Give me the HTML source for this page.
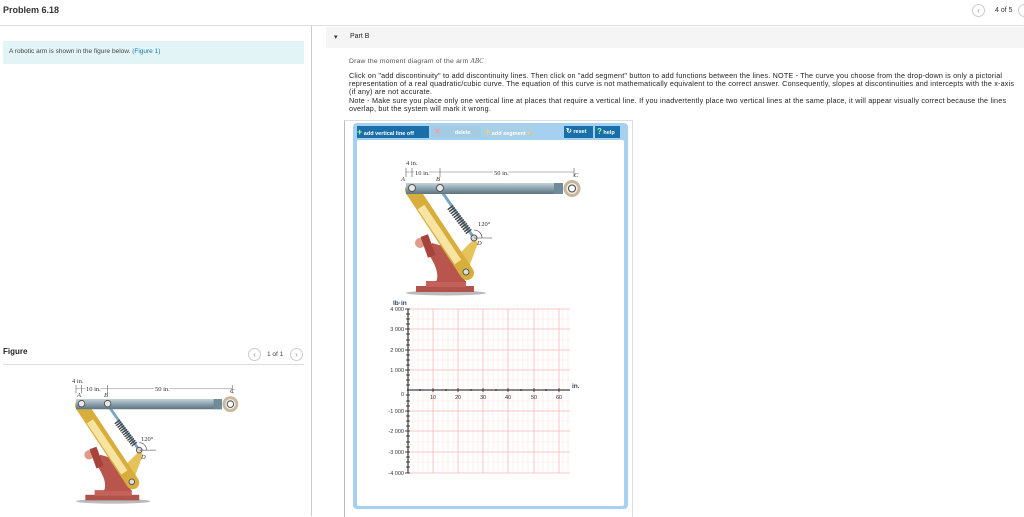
<!DOCTYPE html>
<html><head><meta charset="utf-8"><style>
body{margin:0;width:1024px;height:516px;overflow:hidden;background:#fff;font-family:"Liberation Sans",sans-serif;color:#333;position:relative}
.a{position:absolute;white-space:nowrap}
.circ{position:absolute;width:11px;height:11px;border:1px solid #ccc;border-radius:50%;font-size:8px;color:#999;text-align:center;line-height:11px}
.ins{font-size:7.2px;color:#222;letter-spacing:0.2px}
.btn{position:absolute;top:126px;height:12px;font-size:5.5px;font-weight:bold;color:#fff;line-height:12px}
</style></head><body>
<div class="a" style="left:3px;top:5px;font-size:9px;font-weight:bold;color:#333">Problem 6.18</div>
<div class="a" style="left:0;top:25px;width:1024px;height:1px;background:#ddd"></div>
<div class="a" style="left:311px;top:26px;width:1px;height:490px;background:#ccc"></div>
<div class="circ" style="left:972px;top:4px">‹</div>
<div class="a" style="left:995px;top:7px;font-size:7px">4 of 5</div>
<div class="circ" style="left:1018px;top:4px"></div>

<div class="a" style="left:3px;top:41px;width:301px;height:23px;background:#e3f4f6"></div>
<div class="a" style="left:9px;top:48px;font-size:6.5px;color:#444">A robotic arm is shown in the figure below. <span style="color:#1a7ab0">(Figure 1)</span></div>

<div class="a" style="left:3px;top:347px;font-size:8px;font-weight:bold;color:#222">Figure</div>
<div class="a" style="left:3px;top:364px;width:301px;height:1px;background:#ddd"></div>
<div class="circ" style="left:248px;top:348px">‹</div>
<div class="a" style="left:267px;top:351px;font-size:6.5px;color:#444">1 of 1</div>
<div class="circ" style="left:290px;top:348px">›</div>

<div class="a" style="left:326px;top:27px;width:698px;height:21px;background:#f5f5f5"></div>
<div class="a" style="left:334px;top:33px;font-size:7px">▾</div>
<div class="a" style="left:350px;top:33px;font-size:7px;color:#222">Part B</div>
<div class="a" style="left:349px;top:58px;font-size:6.8px;color:#555;letter-spacing:0.2px">Draw the moment diagram of the arm <i style="font-family:'Liberation Serif'">ABC</i></div>
<div class="a ins" style="left:349px;top:71px">Click on "add discontinuity" to add discontinuity lines. Then click on "add segment" button to add functions between the lines. NOTE - The curve you choose from the drop-down is only a pictorial</div>
<div class="a ins" style="left:349px;top:79px">representation of a real quadratic/cubic curve. The equation of this curve is not mathematically equivalent to the correct answer. Consequently, slopes at discontinuities and intercepts with the x-axis</div>
<div class="a ins" style="left:349px;top:87px">(if any) are not accurate.</div>
<div class="a ins" style="left:349px;top:96px">Note - Make sure you place only one vertical line at places that require a vertical line. If you inadvertently place two vertical lines at the same place, it will appear visually correct because the lines</div>
<div class="a ins" style="left:349px;top:104px">overlap, but the system will mark it wrong.</div>

<div class="a" style="left:344px;top:120px;width:287px;height:396px;border-left:1px solid #bbb;border-top:1px solid #ddd;border-right:1px solid #ddd"></div>
<div class="a" style="left:353px;top:123px;width:275px;height:386px;background:#a6d0f0;border-radius:4px"></div>
<div class="a" style="left:357px;top:140px;width:267px;height:366px;background:#fff;border-radius:2px"></div>
<div class="btn" style="left:357px;width:72px;background:#1b6fa8"><span style="color:#9f9;font-size:9px">+</span> add vertical line off</div>
<div class="btn" style="left:431px;width:50px;background:#a3cbe3"><span style="color:#f9a;font-size:8px;margin-left:3px">✕</span><span style="margin-left:14px">delete</span></div>
<div class="btn" style="left:483px;width:53px;background:#a8cfe6"><span style="color:#fc6;font-size:9px;margin-left:2px">+</span> add segment <span style="color:#fc6">▾</span></div>
<div class="btn" style="left:564px;width:29px;background:#1b6fa8"><span style="font-size:7px;margin-left:2px">↻</span> reset</div>
<div class="btn" style="left:595px;width:25px;background:#1b6fa8"><span style="color:#9f9;font-size:8px;margin-left:2px">?</span> help</div>

<svg class="a" style="left:0;top:0" width="1024" height="516">
<defs>
<linearGradient id="bar" x1="0" y1="0" x2="0" y2="1"><stop offset="0" stop-color="#c4d3da"/><stop offset=".5" stop-color="#8aa2ad"/><stop offset="1" stop-color="#5d7480"/></linearGradient>
<g id="fig">
<ellipse cx="40" cy="110" rx="40" ry="2.5" fill="#bbb"/>
<rect x="10" y="103" width="58" height="6" fill="#b0544b"/>
<rect x="20" y="98" width="40" height="6" fill="#c3625a"/>
<path d="M30 99 C34 90 28 80 22 70 L26 60 L40 64 L52 78 C56 88 56 94 60 99 Z" fill="#b8564d"/>
<circle cx="14" cy="60" r="5" fill="#e09a8a"/>
<rect x="18" y="52" width="8" height="22" fill="#a8433c" transform="rotate(-20 22 63)"/>
<path d="M50 74 L68 56 L72 60 L60 92 Z" fill="#e5c35a"/>
<line x1="6" y1="7" x2="61" y2="90" stroke="#d7ae3c" stroke-width="14" stroke-linecap="round"/>
<line x1="15" y1="24" x2="52" y2="79" stroke="#f7e3a2" stroke-width="8"/>
<circle cx="60" cy="89" r="3" fill="#ddd" stroke="#555"/>
<line x1="34" y1="6" x2="68" y2="55" stroke="#7aa6c2" stroke-width="3"/>
<line x1="44" y1="24" x2="63" y2="49" stroke="#444" stroke-width="7" stroke-dasharray="1.5 1"/>
<circle cx="68" cy="55" r="3" fill="#ddd" stroke="#555"/>
<rect x="0" y="0" width="156" height="11" fill="url(#bar)"/>
<rect x="148" y="0" width="9" height="11" fill="#6f8a99"/>
<circle cx="166" cy="5.5" r="7" fill="#eee" stroke="#c8b79a" stroke-width="3"/>
<circle cx="166" cy="5.5" r="3.5" fill="#fff" stroke="#444"/>
<circle cx="6" cy="5" r="3.5" fill="#e8e8e8" stroke="#555"/>
<circle cx="34" cy="5" r="3.5" fill="#e8e8e8" stroke="#555"/>
<path d="M68 47 A8 8 0 0 1 76 55" fill="none" stroke="#333" stroke-width=".6"/>
<line x1="68" y1="55" x2="86" y2="55" stroke="#333" stroke-width=".6"/>
<line x1="0" y1="-11" x2="168" y2="-11" stroke="#777" stroke-width=".5"/>
<line x1="0" y1="-15" x2="0" y2="-6" stroke="#555" stroke-width=".6"/>
<line x1="6" y1="-15" x2="6" y2="-6" stroke="#555" stroke-width=".6"/>
<line x1="34" y1="-15" x2="34" y2="-6" stroke="#555" stroke-width=".6"/>
<line x1="168" y1="-15" x2="168" y2="-6" stroke="#555" stroke-width=".6"/>
</g>
</defs>
<use href="#fig" transform="translate(406,183)"/>
<use href="#fig" transform="translate(76,399) scale(0.93)"/>
<g font-family="Liberation Serif" font-size="6.5" fill="#333">
<text x="406" y="165">4 in.</text><text x="415" y="175" fill="#fff" stroke="#fff" stroke-width="3">10 in.</text><text x="415" y="175">10 in.</text>
<text x="494" y="175" fill="#fff" stroke="#fff" stroke-width="3">50 in.</text><text x="494" y="175">50 in.</text>
<text x="401" y="181" font-style="italic">A</text><text x="436" y="181" font-style="italic">B</text><text x="574" y="177" font-style="italic">C</text>
<text x="478" y="226">120°</text><text x="477" y="245" font-style="italic">D</text>
<text x="72" y="383">4 in.</text><text x="86" y="391" fill="#fff" stroke="#fff" stroke-width="3">10 in.</text><text x="86" y="391">10 in.</text>
<text x="155" y="391" fill="#fff" stroke="#fff" stroke-width="3">50 in.</text><text x="155" y="391">50 in.</text>
<text x="77" y="397" font-style="italic">A</text><text x="104" y="397" font-style="italic">B</text><text x="230" y="393" font-style="italic">C</text>
<text x="141" y="441">120°</text><text x="141" y="459" font-style="italic">D</text>
</g>
</svg>

<svg class="a" style="left:0;top:0" width="1024" height="516">
<g stroke="#fde4e4" stroke-width=".6">
<path d="M413 309V473M418 309V473M423 309V473M428 309V473M438 309V473M443 309V473M448 309V473M453 309V473M463 309V473M468 309V473M473 309V473M478 309V473M488 309V473M493 309V473M498 309V473M503 309V473M513 309V473M518 309V473M523 309V473M528 309V473M538 309V473M543 309V473M548 309V473M553 309V473M563 309V473M568 309V473"/>
<path d="M408 319H570M408 340H570M408 360H570M408 380H570M408 401H570M408 421H570M408 442H570M408 462H570"/>
</g>
<g stroke="#f9b8b8" stroke-width=".8">
<path d="M433 309V473M458 309V473M483 309V473M508 309V473M534 309V473M559 309V473"/>
<path d="M408 309H570M408 329H570M408 350H570M408 370H570M408 411H570M408 431H570M408 452H570M408 473H570"/>
</g>
<line x1="408" y1="309" x2="408" y2="473" stroke="#111" stroke-width="1"/>
<line x1="407" y1="390" x2="570" y2="390" stroke="#111" stroke-width="1"/>
<g stroke="#111" stroke-width=".7">
<path d="M405 309h5M405 329h5M405 350h5M405 370h5M405 411h5M405 431h5M405 452h5M405 473h5M406 314h4M406 319h4M406 324h4M406 334h4M406 340h4M406 345h4M406 355h4M406 360h4M406 365h4M406 375h4M406 380h4M406 385h4M406 395h4M406 401h4M406 406h4M406 416h4M406 421h4M406 426h4M406 436h4M406 442h4M406 447h4M406 457h4M406 462h4M406 467h4"/>
<path d="M433 388v4M458 388v4M483 388v4M508 388v4M534 388v4M559 388v4M420 389v2M446 389v2M471 389v2M496 389v2M521 389v2M546 389v2"/>
</g>
<g font-family="Liberation Sans" font-size="5.5" fill="#333" text-anchor="end">
<text x="404" y="311">4 000</text><text x="404" y="331">3 000</text><text x="404" y="352">2 000</text><text x="404" y="372">1 000</text><text x="404" y="396">0</text>
<text x="404" y="413">-1 000</text><text x="404" y="433">-2 000</text><text x="404" y="454">-3 000</text><text x="404" y="475">-4 000</text>
</g>
<g font-family="Liberation Sans" font-size="5.5" fill="#333" text-anchor="middle">
<text x="433" y="399">10</text><text x="458" y="399">20</text><text x="483" y="399">30</text><text x="508" y="399">40</text><text x="534" y="399">50</text><text x="559" y="399">60</text>
</g>
<text x="393" y="305" font-family="Liberation Sans" font-size="6.5" font-weight="bold" fill="#345">lb·in</text>
<text x="572" y="388" font-family="Liberation Sans" font-size="6.5" font-weight="bold" fill="#345">in.</text>
</svg>
</body></html>
